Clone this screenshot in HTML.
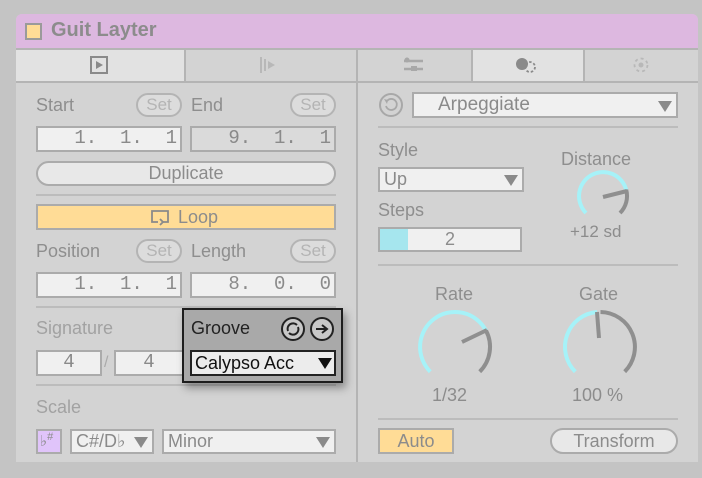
<!DOCTYPE html>
<html><head><style>
*{box-sizing:border-box;margin:0;padding:0}
body{width:702px;height:478px;background:#c4c4c4;position:relative;overflow:hidden;font-family:"Liberation Sans",sans-serif;color:#8c8c8c}
.a{position:absolute}
.lbl{font-size:18px;color:#8e8e8e}
.box{position:absolute;background:#f0f0f0;border:2px solid #ababab;font-family:"Liberation Mono",monospace;font-size:19px;color:#8a8a8a;text-align:right;padding-right:3px;line-height:21px}
.set{position:absolute;border:2px solid #b4b4b4;border-radius:12px;font-size:17px;color:#b4b4b4;text-align:center;line-height:19px;height:24px;width:46px;background:#dcdcdc}
.hr{position:absolute;height:2px;background:#bcbcbc}
.dd{position:absolute;background:#f0f0f0;border:2px solid #ababab;font-size:18px;color:#8a8a8a;line-height:21px;padding-left:4px}
.tri{position:absolute;right:4px;top:6px;width:0;height:0;border-left:7px solid transparent;border-right:7px solid transparent;border-top:11px solid #8a8a8a}
</style></head><body>
<div class="a" style="left:16px;top:14px;width:682px;height:448px;background:#d3d3d3;border-radius:6px 6px 0 0"></div>
<div class="a" style="left:16px;top:14px;width:682px;height:34px;background:#ddb8e0;border-radius:6px 6px 0 0"></div>
<div class="a" style="left:25px;top:23px;width:17px;height:17px;background:#ffdc96;border:2px solid #9a9a9a"></div>
<div class="a" style="left:51px;top:19px;font-size:20px;color:#8c8c8c;font-weight:bold">Guit Layter</div>
<!-- tabs -->
<div class="a" style="left:16px;top:48px;width:682px;height:35px;background:#d3d3d3;border-top:2px solid #b4b4b4;border-bottom:2px solid #b4b4b4"></div>
<div class="a" style="left:16px;top:50px;width:168px;height:31px;background:#e2e2e2"></div>
<div class="a" style="left:184px;top:50px;width:2px;height:31px;background:#b4b4b4"></div>
<div class="a" style="left:356px;top:50px;width:2px;height:412px;background:#b4b4b4"></div>
<div class="a" style="left:471px;top:50px;width:114px;height:31px;background:#e2e2e2;border-left:2px solid #b4b4b4;border-right:2px solid #b4b4b4"></div>
<!-- left panel -->
<div class="a lbl" style="left:36px;top:95px">Start</div>
<div class="set" style="left:136px;top:93px">Set</div>
<div class="a lbl" style="left:191px;top:95px">End</div>
<div class="set" style="left:290px;top:93px">Set</div>
<div class="box" style="left:36px;top:126px;width:146px;height:26px">1.&nbsp;&nbsp;1.&nbsp;&nbsp;1</div>
<div class="box" style="left:190px;top:126px;width:146px;height:26px;background:#dadada">9.&nbsp;&nbsp;1.&nbsp;&nbsp;1</div>
<div class="a" style="left:36px;top:161px;width:300px;height:25px;border:2px solid #ababab;border-radius:13px;background:#e8e8e8;text-align:center;font-size:18px;line-height:21px">Duplicate</div>
<div class="hr" style="left:36px;top:194px;width:300px"></div>
<div class="a" style="left:36px;top:204px;width:300px;height:26px;background:#ffdc96;border:2px solid #ababab;font-size:18px;line-height:22px;padding-left:140px">Loop</div>
<div class="a lbl" style="left:36px;top:241px">Position</div>
<div class="set" style="left:136px;top:239px">Set</div>
<div class="a lbl" style="left:191px;top:241px">Length</div>
<div class="set" style="left:290px;top:239px">Set</div>
<div class="box" style="left:36px;top:272px;width:146px;height:26px">1.&nbsp;&nbsp;1.&nbsp;&nbsp;1</div>
<div class="box" style="left:190px;top:272px;width:146px;height:26px">8.&nbsp;&nbsp;0.&nbsp;&nbsp;0</div>
<div class="hr" style="left:36px;top:306px;width:300px"></div>
<div class="a lbl" style="left:36px;top:318px;color:#a2a2a2">Signature</div>
<div class="box" style="left:36px;top:350px;width:66px;height:26px;text-align:center;padding:0">4</div>
<div class="a" style="left:104px;top:354px;font-size:16px;color:#aaa">/</div>
<div class="box" style="left:114px;top:350px;width:70px;height:26px;text-align:center;padding:0">4</div>
<div class="hr" style="left:36px;top:384px;width:300px"></div>
<div class="a lbl" style="left:36px;top:397px;color:#a2a2a2">Scale</div>
<div class="a" style="left:36px;top:429px;width:26px;height:25px;background:#e0c4fa;border:2px solid #ababab;font-size:15px;color:#8a8a8a;padding-left:2px">♭<sup style="font-size:11px">#</sup></div>
<div class="dd" style="left:70px;top:429px;width:84px;height:25px">C#/D♭<span class="tri"></span></div>
<div class="dd" style="left:162px;top:429px;width:174px;height:25px">Minor<span class="tri"></span></div>
<!-- groove popup -->
<div class="a" style="left:182px;top:308px;width:161px;height:75px;background:#a9a9a9;border:2px solid #1e1e1e;box-shadow:3px 5px 8px rgba(0,0,0,.35)"></div>
<div class="a" style="left:191px;top:318px;font-size:18px;color:#222">Groove</div>
<div class="a" style="left:190px;top:350px;width:146px;height:26px;border:2px solid #222;background:#ececec;font-size:18px;color:#111;line-height:22px;padding-left:3px;overflow:hidden;white-space:nowrap">Calypso Acc<span style="position:absolute;right:2px;top:6px;border-left:7px solid transparent;border-right:7px solid transparent;border-top:11px solid #111"></span></div>
<!-- right panel -->
<div class="dd" style="left:412px;top:92px;width:266px;height:26px;padding-left:24px;font-size:19px">Arpeggiate<span class="tri" style="top:7px"></span></div>
<div class="hr" style="left:378px;top:126px;width:300px"></div>
<div class="a lbl" style="left:378px;top:140px">Style</div>
<div class="dd" style="left:378px;top:167px;width:146px;height:25px">Up<span class="tri"></span></div>
<div class="a lbl" style="left:378px;top:200px">Steps</div>
<div class="a" style="left:378px;top:227px;width:144px;height:25px;background:#f0f0f0;border:2px solid #ababab"><div style="position:absolute;left:0;top:0;width:28px;height:21px;background:#a6e6ee"></div><div style="position:absolute;left:0;width:140px;text-align:center;font-size:18px;top:0;line-height:21px">2</div></div>
<div class="a lbl" style="left:561px;top:149px">Distance</div>
<div class="a" style="left:570px;top:222px;font-size:17px">+12 sd</div>
<div class="hr" style="left:378px;top:264px;width:300px"></div>
<div class="a lbl" style="left:435px;top:284px">Rate</div>
<div class="a lbl" style="left:579px;top:284px">Gate</div>
<div class="a" style="left:432px;top:385px;font-size:18px">1/32</div>
<div class="a" style="left:572px;top:385px;font-size:18px">100 %</div>
<div class="hr" style="left:378px;top:418px;width:300px"></div>
<div class="a" style="left:378px;top:428px;width:76px;height:26px;background:#ffdc96;border:2px solid #ababab;text-align:center;font-size:18px;line-height:22px">Auto</div>
<div class="a" style="left:550px;top:428px;width:128px;height:26px;background:#e8e8e8;border:2px solid #ababab;border-radius:13px;text-align:center;font-size:18px;line-height:22px">Transform</div>
<svg class="a" style="left:0;top:0" width="702" height="478">
<rect x="91" y="57" width="16" height="16" fill="none" stroke="#8a8a8a" stroke-width="2"/>
<path d="M96 61 L103 65 L96 69Z" fill="#8a8a8a"/>
<rect x="260" y="57" width="2" height="16" fill="#b8b8b8"/><rect x="264" y="59" width="2" height="12" fill="#b8b8b8"/><path d="M268 61 L275 65 L268 69Z" fill="#b8b8b8"/>
<g stroke="#a8a8a8" stroke-width="2.5"><line x1="404" y1="61" x2="423" y2="61"/><line x1="404" y1="69" x2="423" y2="69"/></g>
<circle cx="407" cy="60" r="2.5" fill="#a8a8a8"/><rect x="411" y="66" width="6" height="5" fill="#a8a8a8"/>
<circle cx="522" cy="64" r="6" fill="#8a8a8a"/><circle cx="530" cy="67" r="5" fill="none" stroke="#8a8a8a" stroke-width="1.8" stroke-dasharray="2.5 2"/>
<circle cx="641" cy="65" r="6.5" fill="none" stroke="#b8b8b8" stroke-width="1.8" stroke-dasharray="3 3"/><circle cx="641" cy="65" r="2.5" fill="#b8b8b8"/>
<circle cx="391" cy="105" r="11" fill="none" stroke="#a8a8a8" stroke-width="2"/>
<path d="M387 101 A5.5 5.5 0 1 1 386 106" fill="none" stroke="#a8a8a8" stroke-width="1.8"/><path d="M384 99 L388 100 L387 104Z" fill="#a8a8a8"/>
<g fill="none" stroke-width="4">
<path d="M586 213 A24 24 0 1 1 626.2 189.8" stroke="#a6f2f8"/>
<path d="M626.2 189.8 A24 24 0 0 1 620 213" stroke="#8f8f8f"/>
<path d="M430.3 371.7 A35 35 0 1 1 486 330.6" stroke="#a6f2f8"/>
<path d="M486 330.6 A35 35 0 0 1 479.7 371.7" stroke="#8f8f8f"/>
<path d="M575.3 371.7 A35 35 0 0 1 597 312" stroke="#a6f2f8"/>
<path d="M600.5 312 A35 35 0 0 1 624.7 371.7" stroke="#8f8f8f"/>
</g>
<g stroke="#8f8f8f" stroke-width="4"><line x1="603" y1="197" x2="627" y2="191"/><line x1="462" y1="342" x2="487" y2="330"/><line x1="599" y1="338" x2="597" y2="312"/></g>
<path d="M158 222 L152 222 L152 211 L168 211 L168 222 L162 222" fill="none" stroke="#8a8a8a" stroke-width="1.8"/><path d="M160 219 L163 222 L160 225" fill="none" stroke="#8a8a8a" stroke-width="1.8"/>
<circle cx="293" cy="329" r="11" fill="#c8c8c8" stroke="#222" stroke-width="2"/>
<path d="M288 331 A5.5 5.5 0 0 1 297 325 M298 327 A5.5 5.5 0 0 1 289 333" fill="none" stroke="#222" stroke-width="2"/>
<circle cx="322" cy="329" r="11" fill="#c8c8c8" stroke="#222" stroke-width="2"/>
<path d="M316 329 L326 329 M322 325 L327 329 L322 333" fill="none" stroke="#222" stroke-width="2"/>
</svg>
</body></html>
